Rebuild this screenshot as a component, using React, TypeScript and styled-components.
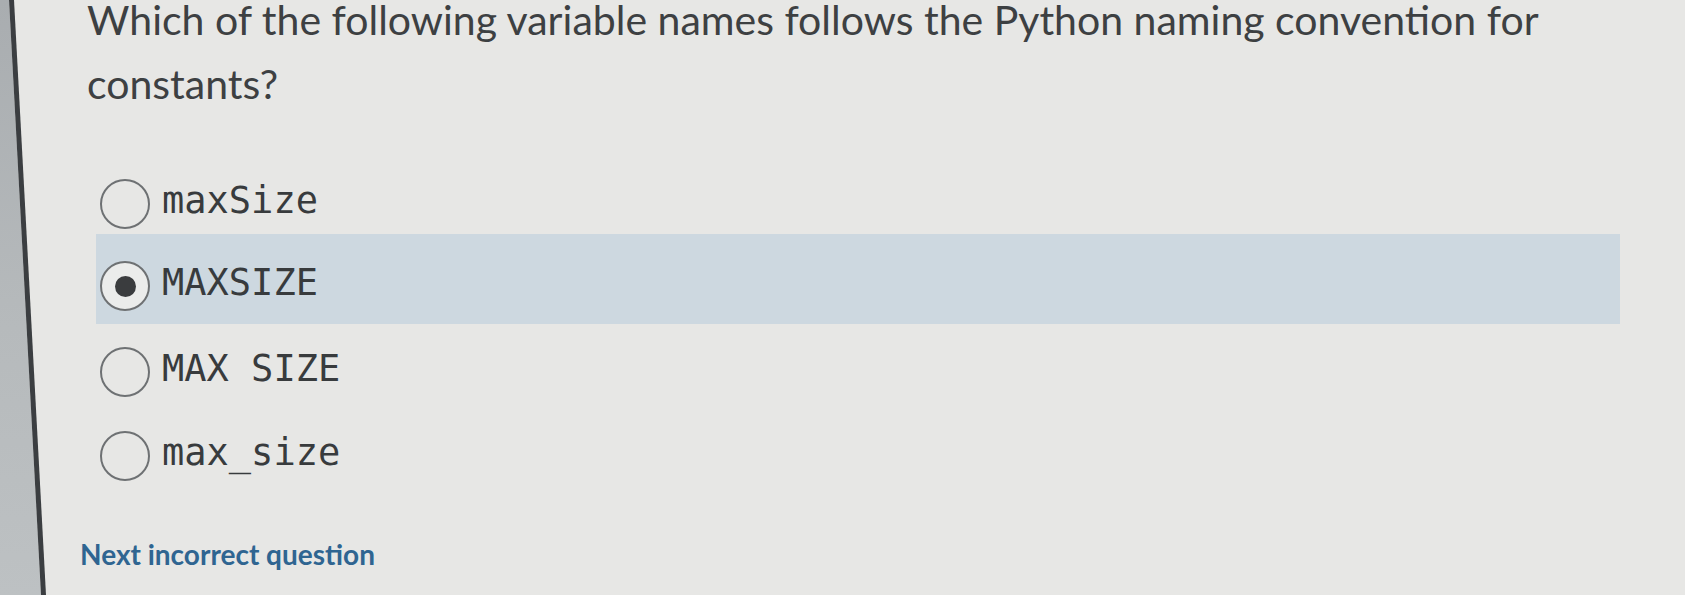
import React from 'react';
import styled, { createGlobalStyle } from 'styled-components';

const GlobalStyle = createGlobalStyle`
  html, body {
    margin: 0;
    padding: 0;
    background: #e7e7e5;
    overflow: hidden;
  }
`;

const StyledPage = styled.div`
  width: 1685px;
  height: 595px;
  display: flex;
  background: #e7e7e5;
  overflow: hidden;
`;

// left edge of the window: grey rail with a dark divider running down it
const StyledRail = styled.div`
  width: 48px;
  flex-shrink: 0;
  position: relative;

  &::before {
    content: '';
    position: absolute;
    inset: 0;
    background: linear-gradient(180deg, #a9adb0 0%, #b6babc 55%, #bdc1c3 100%);
    clip-path: polygon(0 0, 9px 0, 41px 100%, 0 100%);
  }

  &::after {
    content: '';
    position: absolute;
    inset: 0;
    background: #3b3e41;
    clip-path: polygon(9px 0, 14px 0, 46px 100%, 41px 100%);
  }
`;

const StyledContent = styled.div`
  flex: 1;
  display: flex;
  flex-direction: column;
  padding-left: 32px;
`;

const StyledQuestion = styled.h2`
  margin: -12px 0 0 7px;
  max-width: 1560px;
  color: #3d4042;
  font-family: Lato, 'Open Sans', sans-serif;
  font-size: 41px;
  font-weight: 400;
  line-height: 64px;
`;

const StyledAnswers = styled.div`
  width: 1524px;
  margin-top: 42px;
  margin-left: 16px;
  display: flex;
  flex-direction: column;
`;

const StyledAnswer = styled.label<{ $selected?: boolean }>`
  box-sizing: border-box;
  height: ${props => (props.$selected ? '90px' : '84px')};
  margin: ${props => (props.$selected ? '-8px 0 2px' : '0')};
  padding: ${props => (props.$selected ? '6px 0 0 4px' : '0 0 0 4px')};
  display: flex;
  align-items: center;
  gap: 12px;
  background: ${props => (props.$selected ? '#cdd8e0' : 'transparent')};
  cursor: pointer;
`;

const StyledRadio = styled.span<{ $checked?: boolean }>`
  width: 50px;
  height: 50px;
  margin-top: 8px;
  box-sizing: border-box;
  border: 2px solid #6e7173;
  border-radius: 50%;
  background: ${props => (props.$checked ? '#ebeceb' : 'transparent')};
  display: flex;
  align-items: center;
  justify-content: center;
  flex-shrink: 0;

  &::after {
    content: '';
    display: ${props => (props.$checked ? 'block' : 'none')};
    width: 21px;
    height: 21px;
    border-radius: 50%;
    background: #3a3c3e;
  }
`;

const StyledCode = styled.span`
  color: #383b3d;
  font-family: 'DejaVu Sans Mono', 'Liberation Mono', monospace;
  font-size: 37px;
  line-height: 1;
`;

const StyledNextLink = styled.a`
  margin-top: 44px;
  align-self: flex-start;
  color: #2f6591;
  font-family: Lato, 'Open Sans', sans-serif;
  font-size: 28px;
  font-weight: 700;
  line-height: 32px;
  text-decoration: none;
  cursor: pointer;
`;

const answers = ['maxSize', 'MAXSIZE', 'MAX SIZE', 'max_size'];

const App: React.FC = () => {
  const selected = 'MAXSIZE';

  return (
    <StyledPage>
      <GlobalStyle />
      <StyledRail />
      <StyledContent>
        <StyledQuestion>
          Which of the following variable names follows the Python naming convention for constants?
        </StyledQuestion>
        <StyledAnswers>
          {answers.map(answer => (
            <StyledAnswer key={answer} $selected={answer === selected}>
              <StyledRadio $checked={answer === selected} />
              <StyledCode>{answer}</StyledCode>
            </StyledAnswer>
          ))}
        </StyledAnswers>
        <StyledNextLink>Next incorrect question</StyledNextLink>
      </StyledContent>
    </StyledPage>
  );
};

export default App;
